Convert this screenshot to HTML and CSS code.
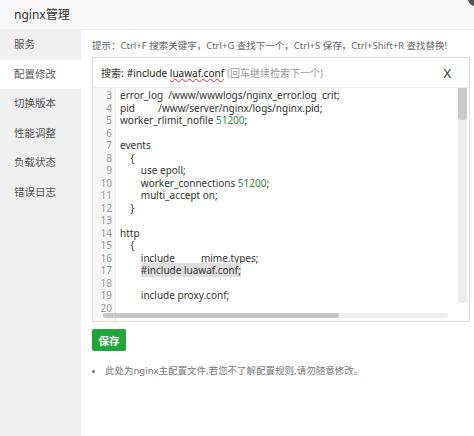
FILE: index.html
```html
<!DOCTYPE html>
<html lang="zh-CN">
<head>
  <meta charset="UTF-8">
  <title>nginx管理</title>
  <link rel="stylesheet" href="styles.css">
</head>
<body>

  <!-- Layer window -->
  <div class="layer">
    <div class="layer-title">nginx管理</div>
    <span class="layer-close"></span>

    <div class="layer-body">
      <!-- Side menu -->
      <ul class="side-menu">
        <li class="menu-item">服务</li>
        <li class="menu-item active">配置修改</li>
        <li class="menu-item">切换版本</li>
        <li class="menu-item">性能调整</li>
        <li class="menu-item">负载状态</li>
        <li class="menu-item">错误日志</li>
      </ul>

      <!-- Config editor -->
      <div class="main-content">
        <p class="hint">提示：Ctrl+F 搜索关键字，Ctrl+G 查找下一个，Ctrl+S 保存，Ctrl+Shift+R 查找替换!</p>

        <div class="editor">
          <div class="search-bar">
            <span class="search-label">搜索:</span>
            <span class="search-value">#include <span class="misspelled">luawaf.conf</span></span>
            <span class="search-tip">(回车继续检索下一个)</span>
            <span class="search-close">X</span>
          </div>

          <div class="code-area">
            <div class="code-lines">
              <div class="row"><span class="ln">3</span><span class="line">error_log  /www/wwwlogs/nginx_error.log  crit;</span></div>
              <div class="row"><span class="ln">4</span><span class="line">pid         /www/server/nginx/logs/nginx.pid;</span></div>
              <div class="row"><span class="ln">5</span><span class="line">worker_rlimit_nofile <span class="num">51200</span>;</span></div>
              <div class="row"><span class="ln">6</span><span class="line"> </span></div>
              <div class="row"><span class="ln">7</span><span class="line">events</span></div>
              <div class="row"><span class="ln">8</span><span class="line">    {</span></div>
              <div class="row"><span class="ln">9</span><span class="line">        use epoll;</span></div>
              <div class="row"><span class="ln">10</span><span class="line">        worker_connections <span class="num">51200</span>;</span></div>
              <div class="row"><span class="ln">11</span><span class="line">        multi_accept on;</span></div>
              <div class="row"><span class="ln">12</span><span class="line">    }</span></div>
              <div class="row"><span class="ln">13</span><span class="line"> </span></div>
              <div class="row"><span class="ln">14</span><span class="line">http</span></div>
              <div class="row"><span class="ln">15</span><span class="line">    {</span></div>
              <div class="row"><span class="ln">16</span><span class="line">        include          mime.types;</span></div>
              <div class="row"><span class="ln">17</span><span class="line">        <span class="match">#include luawaf.conf;</span></span></div>
              <div class="row"><span class="ln">18</span><span class="line"> </span></div>
              <div class="row"><span class="ln">19</span><span class="line">        include proxy.conf;</span></div>
              <div class="row"><span class="ln">20</span><span class="line"> </span></div>
            </div>
            <div class="vscroll"><span class="vthumb"></span></div>
            <div class="hscroll"><span class="hthumb"></span></div>
          </div>
        </div>

        <button class="btn-save">保存</button>

        <ul class="notes">
          <li>此处为nginx主配置文件,若您不了解配置规则,请勿随意修改。</li>
        </ul>
      </div>
    </div>
  </div>

</body>
</html>
```

FILE: styles.css
```css
/* Base styles */
* {
  margin: 0;
  padding: 0;
  box-sizing: border-box;
}

body {
  font-family: 'Noto Sans', 'Noto Sans CJK SC', sans-serif;
  background-color: #ffffff;
  color: #333;
  width: 474px;
  height: 436px;
  overflow: hidden;
}

/* Layer window */
.layer {
  position: relative;
  height: 436px;
  display: flex;
  flex-direction: column;
}

.layer-title {
  height: 30px;
  line-height: 30px;
  padding-left: 14px;
  font-size: 12px;
  color: #333;
  background-color: #f8f8f8;
  border-bottom: 1px solid #eeeeee;
}

.layer-close {
  position: absolute;
  top: -8px;
  right: -8px;
  width: 14px;
  height: 14px;
  border-radius: 50%;
  background-color: #555;
}

.layer-body {
  flex: 1;
  display: flex;
}

/* Side menu */
.side-menu {
  width: 81px;
  list-style: none;
  background-color: #f0f0f0;
}

.menu-item {
  height: 29.5px;
  line-height: 29.5px;
  padding-left: 14px;
  font-size: 10.5px;
  color: #555;
}

.menu-item.active {
  background-color: #ffffff;
}

/* Main content */
.main-content {
  flex: 1;
  padding: 9px 4px 0 11px;
}

.hint {
  font-size: 9.5px;
  line-height: 14px;
  color: #666;
  white-space: nowrap;
  margin-bottom: 4px;
}

/* Editor */
.editor {
  border: 1px solid #dddddd;
  width: 378px;
}

.search-bar {
  height: 30px;
  display: flex;
  align-items: center;
  padding: 0 8px;
  font-size: 10px;
  border-bottom: 1px solid #eeeeee;
  white-space: nowrap;
}

.search-label {
  color: #333;
  margin-right: 3px;
}

.search-value {
  color: #222;
  margin-right: 3px;
}

.misspelled {
  text-decoration: underline wavy #e03030;
  text-decoration-thickness: 1px;
}

.search-tip {
  color: #999;
}

.search-close {
  margin-left: auto;
  margin-right: 10px;
  font-size: 13px;
  color: #333;
}

/* Code area: gutter drawn as background so it runs to the bottom */
.code-area {
  position: relative;
  height: 233px;
  font-size: 10px;
  line-height: 12.5px;
  background: linear-gradient(to right, #f7f7f7 0 22px, #e6e6e6 22px 23px, #ffffff 23px);
}

.code-lines {
  padding-top: 1px;
}

.row {
  display: flex;
  height: 12.5px;
}

.ln {
  flex: none;
  width: 22px;
  padding-right: 3px;
  text-align: right;
  color: #999;
}

.line {
  padding-left: 5px;
  color: #333;
  white-space: pre;
}

.num {
  color: #3a8a4a;
}

.match {
  background-color: #dedede;
}

/* Fake scrollbars */
.vscroll {
  position: absolute;
  top: 0;
  right: 2px;
  width: 9px;
  height: 215px;
  background-color: #ececec;
}

.vthumb {
  display: block;
  height: 32px;
  background-color: #c8c8c8;
  border-radius: 0 0 3px 3px;
}

.hscroll {
  position: absolute;
  left: 10px;
  bottom: 3px;
  width: 345px;
  height: 5px;
  border-radius: 3px;
  background-color: #ececec;
}

.hthumb {
  display: block;
  width: 236px;
  height: 5px;
  border-radius: 3px;
  background-color: #c6c6c6;
}

/* Save button */
.btn-save {
  display: block;
  margin-top: 7px;
  width: 34px;
  height: 22px;
  border: none;
  border-radius: 2px;
  background-color: #20a53a;
  color: #ffffff;
  font-family: inherit;
  font-size: 10.5px;
  font-weight: 600;
}

/* Notes */
.notes {
  margin-top: 13px;
  padding-left: 13px;
  font-size: 9.5px;
  line-height: 14px;
  color: #777;
}
```
